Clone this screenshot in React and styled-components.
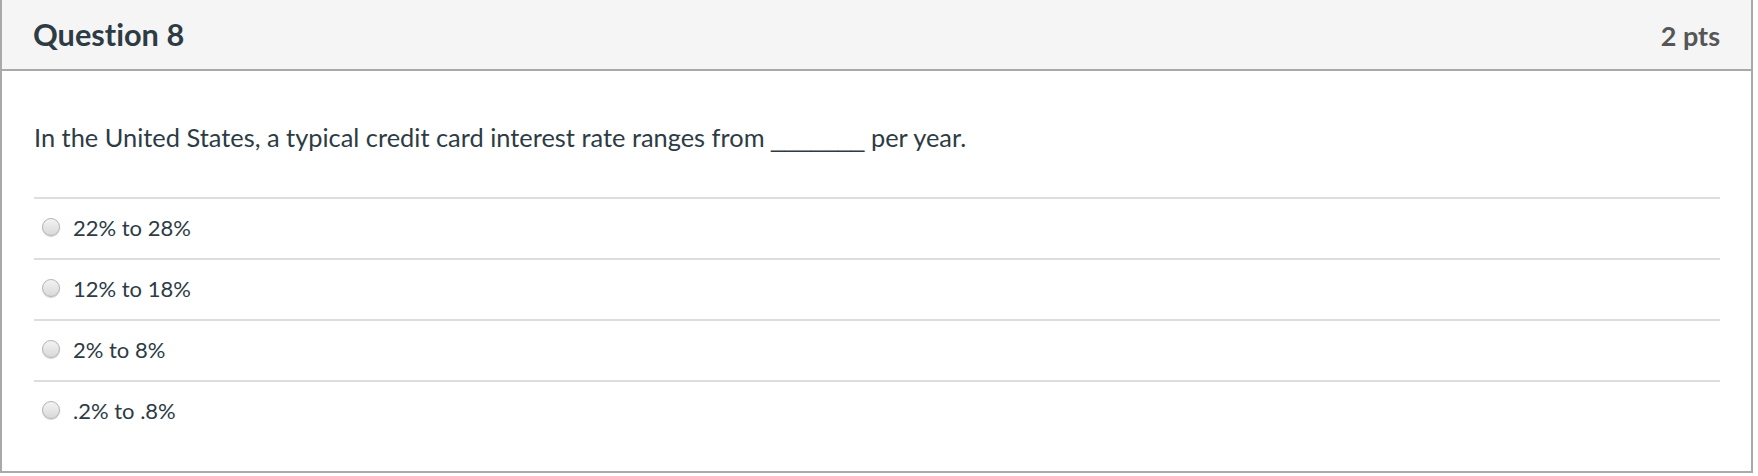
import React from "react";
import styled, { createGlobalStyle } from "styled-components";

const Global = createGlobalStyle`
  html, body { margin: 0; padding: 0; background: #ffffff; }
  body {
    font-family: Lato, "Open Sans", "Liberation Sans", sans-serif;
    color: #2d3b45;
    font-variant-ligatures: none;
  }
`;

const Card = styled.section`
  width: 1749px;
  border: 2px solid #a9a9a9;
  border-top: none;
  background: #ffffff;
  height: 471px;
  box-sizing: content-box;
`;

const Header = styled.header`
  height: 71px;
  background: #f5f5f5;
  border-bottom: 2px solid #a9a9a9;
  display: flex;
  align-items: center;
  justify-content: space-between;
  padding: 1px 31px 0 31px;
  box-sizing: border-box;
`;

const Title = styled.h2`
  margin: 0;
  font-size: 30.7px;
  font-weight: 700;
  color: #2d3b45;
  line-height: 1;
`;

const Points = styled.div`
  font-size: 27px;
  font-weight: 700;
  color: #565656;
  line-height: 1;
`;

const Body = styled.div`
  padding: 46px 31px 0 32px;
`;

const QuestionText = styled.p`
  margin: 0 0 38px 0;
  font-size: 25.4px;
  line-height: 40px;
  color: #2d3b45;
`;

const Blank = styled.span`
  font-family: "Liberation Sans", Arial, sans-serif;
  font-size: 24px;
`;

const Answers = styled.ul`
  list-style: none;
  margin: 0;
  padding: 0;
`;

const Answer = styled.li`
  display: flex;
  align-items: center;
  height: 56px;
  padding: 0 0 3px 8px;
  border-top: 2px solid #dddddd;
  gap: 13px;
`;

const Radio = styled.span`
  width: 16px;
  height: 16px;
  border-radius: 50%;
  border: 1px solid #b3b3b3;
  background: linear-gradient(#f3f3f3, #d9d9d9);
  box-shadow: 0 1px 1px rgba(0, 0, 0, 0.18);
  flex: none;
`;

const AnswerLabel = styled.span`
  font-size: 22px;
  color: #2d3b45;
`;

const answers = ["22% to 28%", "12% to 18%", "2% to 8%", ".2% to .8%"];

export default function App() {
  return (
    <>
      <Global />
      <Card>
        <Header>
          <Title>Question 8</Title>
          <Points>2 pts</Points>
        </Header>
        <Body>
          <QuestionText>
            In the United States, a typical credit card interest rate ranges from <Blank>_______</Blank> per year.
          </QuestionText>
          <Answers>
            {answers.map((a) => (
              <Answer key={a}>
                <Radio />
                <AnswerLabel>{a}</AnswerLabel>
              </Answer>
            ))}
          </Answers>
        </Body>
      </Card>
    </>
  );
}
